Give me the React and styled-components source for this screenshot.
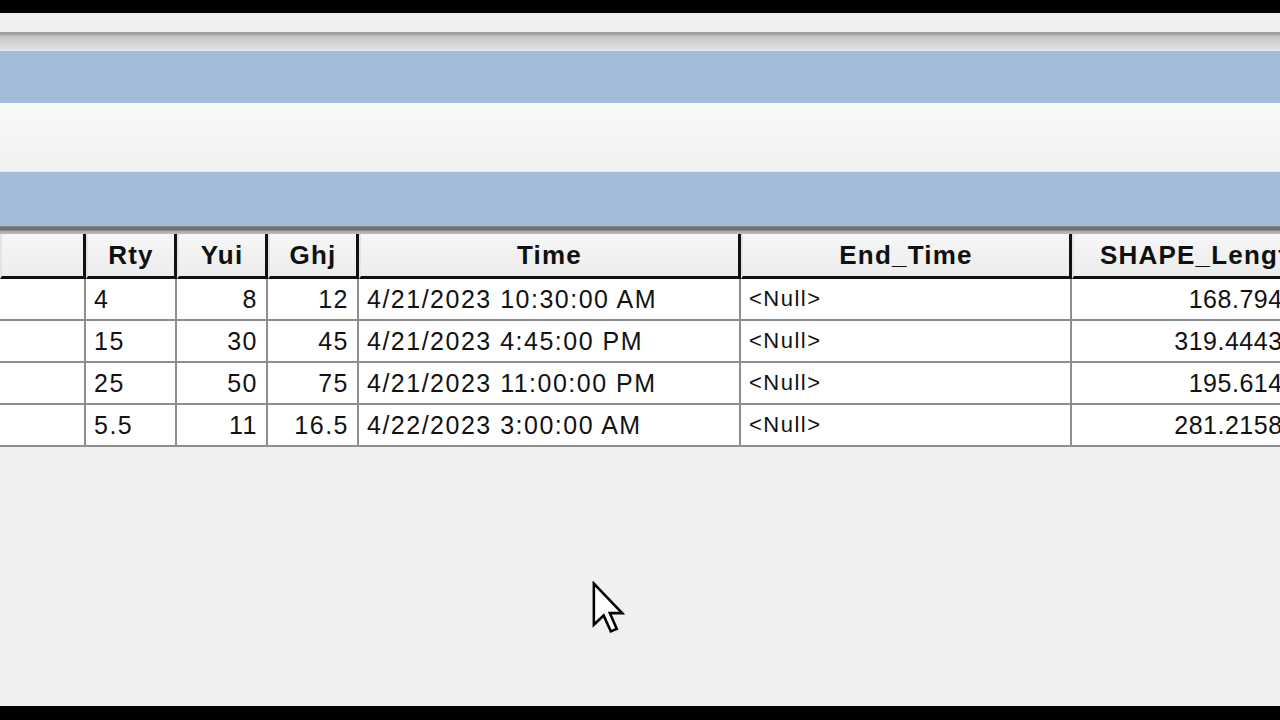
import styled, { createGlobalStyle } from 'styled-components';

const GlobalStyle = createGlobalStyle`
  html, body {
    margin: 0;
    padding: 0;
    background: #f0f0f0;
    overflow: hidden;
  }
  body {
    font-family: "Liberation Sans", Arial, sans-serif;
  }
`;

const Screen = styled.div`
  position: relative;
  width: 1280px;
  height: 720px;
  display: flex;
  flex-direction: column;
  overflow: hidden;
  background: #f0f0f0;
`;

const Letterbox = styled.div`
  height: ${(props) => props.h}px;
  background: #000;
  flex-shrink: 0;
`;

const Strip = styled.div`
  height: 19px;
  background: #f0f0f0;
  flex-shrink: 0;
`;

const Bevel = styled.div`
  height: 18px;
  flex-shrink: 0;
  background: linear-gradient(#9c9c9c 0, #a8a8a8 3px, #c6c6c6 4px, #d6d6d6 12px, #e2e2e2 18px);
`;

const BlueBand = styled.div`
  height: ${(props) => props.h}px;
  flex-shrink: 0;
  background: #a3bcd9;
  border-top: 1px solid #dfe8f2;
`;

const WhiteBand = styled.div`
  height: 68px;
  flex-shrink: 0;
  background: linear-gradient(#f9f9f9, #f1f1f1);
`;

const GridEdge = styled.div`
  height: 8px;
  flex-shrink: 0;
  background: linear-gradient(#8c8c8c 0, #6e6e6e 2px, #767676 4px, #a6a6a6 5px, #bdbdbd 8px);
`;

const TableWrap = styled.div`
  width: 1280px;
  overflow: hidden;
  flex-shrink: 0;
`;

const Grid = styled.table`
  border-collapse: separate;
  border-spacing: 0;
  table-layout: fixed;
  width: 1307px;
  color: #121212;
`;

const HeadCell = styled.th`
  box-sizing: border-box;
  height: 45px;
  padding: 0;
  background: linear-gradient(#f6f6f6, #ededed);
  border-left: 2px solid #e4e4e4;
  border-right: 3px solid #111;
  border-bottom: 3px solid #111;
  font-size: 26px;
  font-weight: bold;
  letter-spacing: 1.2px;
  text-align: ${(props) => props.align || 'center'};
  padding-left: ${(props) => (props.align === 'left' ? '26px' : '0')};
  white-space: nowrap;
  overflow: hidden;
  color: #101010;
`;

const Cell = styled.td`
  height: 40px;
  padding: 0 8px;
  background: #fff;
  border-right: 2px solid #8e8e8e;
  border-bottom: 2px solid #8e8e8e;
  font-size: ${(props) => (props.small ? '22px' : '25px')};
  letter-spacing: ${(props) => (props.tight ? '0.5px' : '1.5px')};
  text-align: ${(props) => (props.right ? 'right' : 'left')};
  white-space: nowrap;
  overflow: hidden;
`;

const CursorMark = styled.svg`
  position: absolute;
  left: 591px;
  top: 581px;
  width: 34px;
  height: 54px;
`;

const widths = [86, 91, 91, 91, 382, 331, 235];

const rows = [
  ['4', '8', '12', '4/21/2023 10:30:00 AM', '168.7946'],
  ['15', '30', '45', '4/21/2023 4:45:00 PM', '319.44431'],
  ['25', '50', '75', '4/21/2023 11:00:00 PM', '195.6147'],
  ['5.5', '11', '16.5', '4/22/2023 3:00:00 AM', '281.21580'],
];

const Cursor = () => (
  <CursorMark viewBox="0 0 13 21">
    <path
      d="M1 1 L1 17 L4.8 13.4 L7.6 19.6 L9.9 18.6 L7.2 12.5 L12 12.5 Z"
      fill="#fff"
      stroke="#000"
      strokeWidth="1"
      strokeLinejoin="miter"
    />
  </CursorMark>
);

const App = () => (
  <Screen>
    <GlobalStyle />
    <Letterbox h={13} />
    <Strip />
    <Bevel />
    <BlueBand h={52} />
    <WhiteBand />
    <BlueBand h={54} />
    <GridEdge />
    <TableWrap>
      <Grid>
        <colgroup>
          {widths.map((w, i) => (
            <col key={i} style={{ width: w }} />
          ))}
        </colgroup>
        <thead>
          <tr>
            <HeadCell />
            <HeadCell>Rty</HeadCell>
            <HeadCell>Yui</HeadCell>
            <HeadCell>Ghj</HeadCell>
            <HeadCell>Time</HeadCell>
            <HeadCell>End_Time</HeadCell>
            <HeadCell align="left">SHAPE_Length</HeadCell>
          </tr>
        </thead>
        <tbody>
          {rows.map((r, i) => (
            <tr key={i}>
              <Cell />
              <Cell>{r[0]}</Cell>
              <Cell right>{r[1]}</Cell>
              <Cell right>{r[2]}</Cell>
              <Cell>{r[3]}</Cell>
              <Cell small>&lt;Null&gt;</Cell>
              <Cell right tight>{r[4]}</Cell>
            </tr>
          ))}
        </tbody>
      </Grid>
    </TableWrap>
    <div style={{ flex: 1 }} />
    <Letterbox h={14} />
    <Cursor />
  </Screen>
);

export default App;
